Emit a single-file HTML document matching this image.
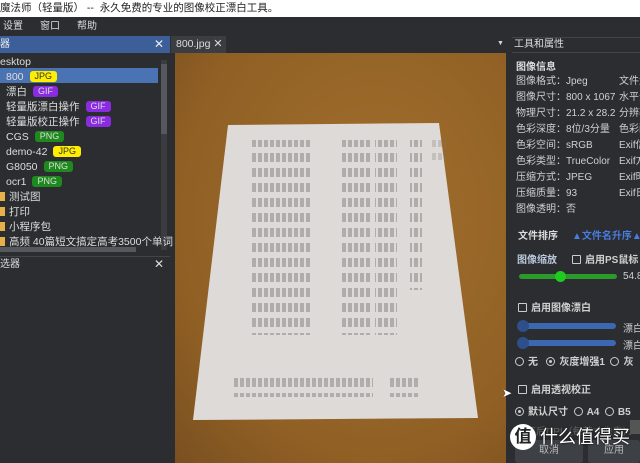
<!DOCTYPE html>
<html><head><meta charset="utf-8"><style>
*{margin:0;padding:0;box-sizing:border-box}
body{width:640px;height:463px;overflow:hidden;background:#2b2d30;font-family:"Liberation Sans","Noto Sans CJK SC",sans-serif;font-size:10px;color:#d8d8d8;position:relative}
.a{position:absolute;white-space:nowrap}
.tag{display:inline-block;font-size:9px;line-height:11px;padding:0 5px;border-radius:3px;margin-left:6px;vertical-align:1px}
.jpg{background:#ffee00;color:#333}.gif{background:#8a2be2;color:#ddd}.png{background:#1e8a1e;color:#ddd}
.fold{display:inline-block;width:5px;height:9px;background:#e8b04a;margin-right:4px;vertical-align:-1px}
.r{font-size:10px;color:#d0d0d0}
.cb{display:inline-block;width:9px;height:9px;border:1px solid #ccc;border-radius:1px;margin-right:4px;vertical-align:-1px}
.rd{display:inline-block;width:9px;height:9px;border:1px solid #ccc;border-radius:50%;margin-right:4px;vertical-align:-1px;position:relative}
.rd.on::after{content:"";position:absolute;left:2px;top:2px;width:3px;height:3px;background:#ccc;border-radius:50%}
</style></head><body>
<div class="a" style="left:0;top:0;width:640px;height:17px;background:#fff;color:#222;font-size:10.5px;line-height:17px">魔法师（轻量版） --&nbsp; 永久免费的专业的图像校正漂白工具。</div>
<div class="a" style="left:0;top:17px;width:640px;height:19px;background:#2b2d30;line-height:20px;font-size:10px;color:#ddd"><span style="margin-left:3px">设置</span><span style="margin-left:17px">窗口</span><span style="margin-left:17px">帮助</span></div>
<div class="a" style="left:0;top:36px;width:170px;height:17px;background:#3c5f9a;line-height:17px;color:#eee">器<span style="position:absolute;left:154px;font-size:12px">✕</span></div>
<div class="a" style="left:0;top:68px;width:158px;height:15px;background:#4a73b3"></div>
<div class="a" style="left:161px;top:60px;width:6px;height:190px;background:#3a3c40"></div>
<div class="a" style="left:161px;top:64px;width:6px;height:70px;background:#55585c"></div>
<div class="a" style="left:0;top:55px;line-height:15px;font-size:10.5px;color:#ddd">
<div>esktop</div>
<div style="padding-left:6px">800<span class="tag jpg">JPG</span></div>
<div style="padding-left:6px">漂白<span class="tag gif">GIF</span></div>
<div style="padding-left:6px">轻量版漂白操作<span class="tag gif">GIF</span></div>
<div style="padding-left:6px">轻量版校正操作<span class="tag gif">GIF</span></div>
<div style="padding-left:6px">CGS<span class="tag png">PNG</span></div>
<div style="padding-left:6px">demo-42<span class="tag jpg">JPG</span></div>
<div style="padding-left:6px">G8050<span class="tag png">PNG</span></div>
<div style="padding-left:6px">ocr1<span class="tag png">PNG</span></div>
<div><span class="fold"></span>测试图</div>
<div><span class="fold"></span>打印</div>
<div><span class="fold"></span>小程序包</div>
<div><span class="fold"></span>高频 40篇短文搞定高考3500个单词</div>
</div>
<div class="a" style="left:0;top:247px;width:160px;height:5px;background:#2b2d30"></div>
<div class="a" style="left:0;top:247px;width:136px;height:5px;background:#55585c"></div>
<div class="a" style="left:0;top:256px;width:170px;height:1px;background:#444"></div>
<div class="a" style="left:0;top:258px;width:170px;line-height:13px;color:#ddd">选器<span style="position:absolute;left:154px;font-size:12px">✕</span></div>
<div class="a" style="left:171px;top:36px;width:55px;height:17px;background:#3a3d42;line-height:17px;padding-left:5px;color:#ddd;font-size:10.5px">800.jpg <span style="font-size:11px">✕</span></div>
<div class="a" style="left:497px;top:40px;font-size:7px">▼</div>
<div class="a" style="left:175px;top:53px;width:331px;height:410px;background:radial-gradient(ellipse at 60% 40%,#a2702e,#8f5f24 70%,#7a5020)"></div>
<svg class="a" style="left:0;top:0" width="640" height="463">
<defs><pattern id="t" width="6" height="15" patternUnits="userSpaceOnUse"><rect x="0" y="3" width="4" height="9" fill="#777"/></pattern></defs>
<polygon points="228,125 439,123 478,418 193,420" fill="#dedad8"/>
<g fill="url(#t)" opacity=".45"><rect x="250" y="140" width="60" height="195"/><rect x="340" y="140" width="30" height="195"/><rect x="432" y="140" width="14" height="20" opacity=".6"/><rect x="375" y="140" width="22" height="195"/><rect x="410" y="140" width="12" height="150"/><rect x="233" y="375" width="140" height="22"/><rect x="390" y="375" width="30" height="22"/></g></svg>
<div class="a" style="left:506px;top:36px;width:134px;height:427px;background:#2b2d30"></div>
<div class="a" style="left:512px;top:37px;width:128px;height:1px;background:#444"></div>
<div class="a" style="left:514px;top:38px;line-height:14px;color:#ddd">工具和属性</div>
<div class="a" style="left:512px;top:52px;width:128px;height:1px;background:#444"></div>
<div class="a" style="left:516px;top:58px;font-weight:bold;color:#ddd">图像信息</div>
<div class="a r" style="left:516px;top:74px;line-height:16px">图像格式：Jpeg<br>图像尺寸：800 x 1067<br>物理尺寸：21.2 x 28.2<br>色彩深度：8位/3分量<br>色彩空间：sRGB<br>色彩类型：TrueColor<br>压缩方式：JPEG<br>压缩质量：93<br>图像透明：否</div>
<div class="a r" style="left:619px;top:74px;line-height:16px">文件大<br>水平分<br>分辨率<br>色彩配<br>Exif信<br>Exif方<br>Exif时<br>Exif日</div>
<div class="a" style="left:518px;top:227px;font-weight:bold;color:#ddd">文件排序</div>
<div class="a" style="left:572px;top:227px;font-weight:bold;color:#4a7de0">▲文件名升序▲</div>
<div class="a" style="left:517px;top:251px;font-weight:bold;color:#bcc8dc">图像缩放</div>
<div class="a r" style="left:572px;top:251px;font-weight:bold"><span class="cb"></span>启用PS鼠标</div>
<div class="a" style="left:519px;top:274px;width:98px;height:5px;background:#2a9a2a;border-radius:3px"></div>
<div class="a" style="left:555px;top:271px;width:11px;height:11px;background:#1ecb1e;border-radius:50%"></div>
<div class="a r" style="left:623px;top:271px">54.8</div>
<div class="a r" style="left:518px;top:299px;font-weight:bold"><span class="cb"></span>启用图像漂白</div>
<div class="a" style="left:519px;top:323px;width:97px;height:6px;background:#3b68b0;border-radius:3px"></div>
<div class="a" style="left:517px;top:320px;width:12px;height:12px;background:#2d4f8a;border-radius:50%"></div>
<div class="a r" style="left:623px;top:320px">漂白</div>
<div class="a" style="left:519px;top:340px;width:97px;height:6px;background:#3b68b0;border-radius:3px"></div>
<div class="a" style="left:517px;top:337px;width:12px;height:12px;background:#2d4f8a;border-radius:50%"></div>
<div class="a r" style="left:623px;top:337px">漂白</div>
<div class="a r" style="left:515px;top:353px;font-weight:bold"><span class="rd"></span>无 &nbsp; <span class="rd on"></span>灰度增强1 &nbsp;<span class="rd"></span>灰</div>
<div class="a r" style="left:518px;top:381px;font-weight:bold"><span class="cb"></span>启用透视校正</div>
<div class="a r" style="left:515px;top:403px;font-weight:bold"><span class="rd on"></span>默认尺寸 &nbsp;<span class="rd"></span>A4 &nbsp;<span class="rd"></span>B5</div>
<div class="a" style="left:516px;top:423px;color:#666">校正后DPI（每英寸像素）：</div>
<div class="a" style="left:630px;top:420px;width:10px;height:14px;background:#555"></div>
<div class="a" style="left:515px;top:440px;width:68px;height:23px;background:#3d4045;border-radius:3px;text-align:center;line-height:22px;color:#bbb">取消</div>
<div class="a" style="left:588px;top:440px;width:52px;height:23px;background:#3d4045;border-radius:3px;text-align:center;line-height:22px;color:#bbb">应用</div>
<div class="a" style="left:510px;top:424px;width:26px;height:26px;background:#fff;border-radius:50%;color:#222;font-size:17px;line-height:26px;text-align:center;font-weight:bold">值</div>
<div class="a" style="left:540px;top:425px;color:#fff;font-size:18px;line-height:24px;text-shadow:0 0 2px #000">什么值得买</div>
<div class="a" style="left:502px;top:386px;color:#fff;font-size:12px;text-shadow:0 0 1px #000">➤</div>
</body></html>
